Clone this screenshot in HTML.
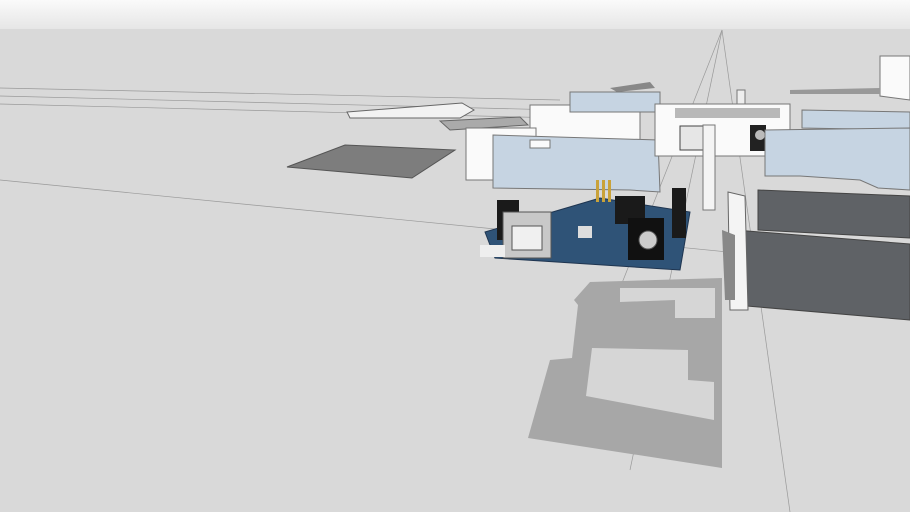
<!DOCTYPE html>
<html><head><style>
html,body{margin:0;padding:0;width:910px;height:512px;overflow:hidden;background:#dadada}
svg{display:block}
</style></head><body>
<svg width="910" height="512" viewBox="0 0 910 512" xmlns="http://www.w3.org/2000/svg">
<defs><linearGradient id="sky" x1="0" y1="0" x2="0" y2="1"><stop offset="0" stop-color="#fafafa"/><stop offset="1" stop-color="#e6e6e6"/></linearGradient></defs>
<rect x="0" y="0" width="910" height="29" fill="url(#sky)"/>
<rect x="0" y="29" width="910" height="483" fill="#d9d9d9"/>
<g stroke="#999" stroke-width="0.7" fill="none">
<line x1="0" y1="88" x2="560" y2="100"/><line x1="0" y1="96" x2="560" y2="110"/><line x1="0" y1="104" x2="560" y2="118"/>
<line x1="0" y1="180" x2="910" y2="270"/>
<line x1="722" y1="30" x2="560" y2="440"/><line x1="722" y1="30" x2="630" y2="470"/><line x1="722" y1="30" x2="790" y2="512"/>
</g>
<!-- left plates -->
<polygon points="347,112 462,103 474,110 460,118 350,118" fill="#f2f2f2" stroke="#666"/>
<polygon points="440,121 520,117 528,125 450,130" fill="#aaa" stroke="#666"/>
<polygon points="287,167 345,145 455,150 412,178" fill="#7d7d7d" stroke="#555"/>
<polygon points="610,88 650,82 655,88 617,92" fill="#888"/>
<!-- white and blue panels -->
<rect x="530" y="105" width="110" height="35" fill="#fafafa" stroke="#777"/>
<rect x="570" y="92" width="90" height="20" fill="#c6d4e2" stroke="#777"/>
<rect x="466" y="128" width="70" height="52" fill="#fafafa" stroke="#777"/>
<polygon points="493,135 658,140 660,192 630,190 493,188" fill="#c6d4e2" stroke="#777"/>
<rect x="530" y="140" width="20" height="8" fill="#fafafa" stroke="#777"/>
<!-- center white box -->
<rect x="655" y="104" width="135" height="52" fill="#fafafa" stroke="#777"/>
<rect x="675" y="108" width="105" height="10" fill="#b8b8b8"/>
<rect x="680" y="126" width="28" height="24" fill="#e6e6e6" stroke="#444"/>
<rect x="750" y="125" width="16" height="26" fill="#222"/>
<circle cx="760" cy="135" r="5" fill="#bbb"/>
<rect x="703" y="125" width="12" height="85" fill="#f4f4f4" stroke="#777"/>
<rect x="737" y="90" width="8" height="14" fill="#eee" stroke="#777"/>
<!-- right panels -->
<polygon points="880,56 910,56 910,100 880,96" fill="#fafafa" stroke="#777"/>
<polygon points="790,90 880,88 880,94 790,94" fill="#999"/>
<polygon points="802,110 910,112 910,130 802,128" fill="#c6d4e2" stroke="#777"/>
<polygon points="765,130 910,128 910,190 878,188 860,180 800,176 765,176" fill="#c6d4e2" stroke="#777"/>
<!-- dark right trays -->
<polygon points="758,190 910,196 910,238 758,230" fill="#5f6266" stroke="#444"/>
<polygon points="735,230 910,244 910,320 735,305" fill="#5f6266" stroke="#444"/>
<polygon points="728,192 745,196 748,310 730,310" fill="#f4f4f4" stroke="#666"/>
<polygon points="722,230 735,235 735,300 725,300" fill="#888"/>
<!-- arduino -->
<polygon points="485,232 600,198 690,212 680,270 495,258" fill="#2f5377" stroke="#1f3550"/>
<rect x="497" y="200" width="22" height="40" fill="#1a1a1a"/>
<rect x="672" y="188" width="14" height="50" fill="#1a1a1a"/>
<rect x="615" y="196" width="30" height="28" fill="#1a1a1a"/>
<rect x="628" y="218" width="36" height="42" fill="#111"/>
<circle cx="648" cy="240" r="9" fill="#ccc" stroke="#555"/>
<rect x="596" y="180" width="3" height="22" fill="#c9a23a"/><rect x="602" y="180" width="3" height="22" fill="#c9a23a"/><rect x="608" y="180" width="3" height="22" fill="#c9a23a"/>
<rect x="503" y="212" width="48" height="46" fill="#c8c8c8" stroke="#555"/>
<rect x="512" y="226" width="30" height="24" fill="#f0f0f0" stroke="#555"/>
<rect x="578" y="226" width="14" height="12" fill="#ddd"/>
<rect x="480" y="245" width="25" height="12" fill="#eee"/>
<!-- gray floor plates -->
<polygon points="590,282 722,278 722,468 528,438 550,360 572,358 578,305 574,300" fill="#a7a7a7"/>
<polygon points="620,288 715,288 715,318 675,318 675,300 620,302" fill="#d6d6d6"/>
<polygon points="592,348 688,350 688,380 714,382 714,420 586,396" fill="#d6d6d6"/>
</svg>
</body></html>
